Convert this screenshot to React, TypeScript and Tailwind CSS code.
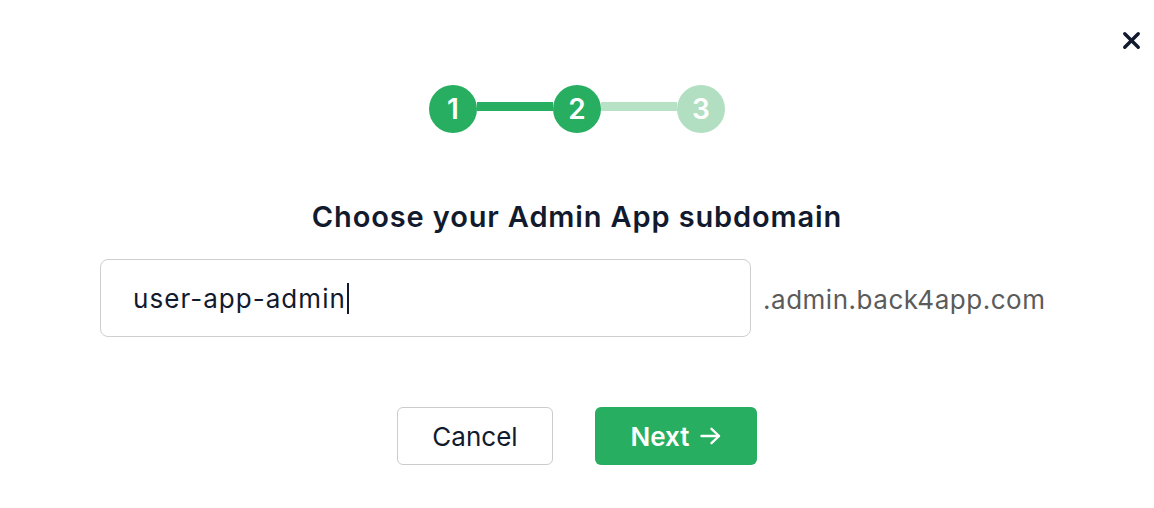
import { X } from "lucide-react";

const steps = [
  { n: 1, done: true },
  { n: 2, done: true },
  { n: 3, done: false },
];

function Stepper() {
  return (
    <div className="flex items-center">
      {steps.map((s, i) => (
        <div key={s.n} className="flex items-center">
          {i > 0 && (
            <div
              className={
                s.done
                  ? "h-[9px] w-[76px] -mt-[6px] bg-[#27ae60]"
                  : "h-[9px] w-[76px] -mt-[6px] bg-[#b7e2c6]"
              }
            />
          )}
          <div
            className={
              s.done
                ? "grid h-12 w-12 place-items-center rounded-full bg-[#27ae60] text-[28px] font-semibold text-white"
                : "grid h-12 w-12 place-items-center rounded-full bg-[#b2dfc1] text-[28px] font-semibold text-white"
            }
          >
            {s.n}
          </div>
        </div>
      ))}
    </div>
  );
}

function Arrow() {
  return (
    <svg width="21" height="18" viewBox="0 0 21 18" fill="none" stroke="currentColor" strokeWidth="2.4" strokeLinecap="round" strokeLinejoin="round">
      <path d="M1.5 9H19" />
      <path d="M11.5 1.8L19 9l-7.5 7.2" />
    </svg>
  );
}

export default function App() {
  return (
    <div className="flex h-[508px] w-full flex-col bg-white font-['Inter',sans-serif] text-[#121a2e]">
      <div className="flex justify-end pt-[27px] pr-[12px]">
        <button aria-label="Close" className="grid h-6 w-6 place-items-center text-[#121a2e]">
          <X size={27} strokeWidth={3} />
        </button>
      </div>

      <div className="mt-[34px] flex justify-center">
        <Stepper />
      </div>

      <h1 className="mt-[67px] text-center text-[29px] leading-[34px] font-semibold tracking-[0.03em]">
        Choose your Admin App subdomain
      </h1>

      <div className="mt-[25px] flex items-center gap-3 pl-[100px]">
        <div className="flex h-[78px] w-[651px] items-center rounded-lg border border-[#cfcfcf] px-8 text-[26px] tracking-[0.04em]">
          <span>user-app-admin</span>
          <span className="ml-[1px] h-[31px] w-[2px] bg-[#121a2e]" />
        </div>
        <span className="mt-[3px] text-[26px] tracking-[0.02em] text-[#5b5b5b]">.admin.back4app.com</span>
      </div>

      <div className="mt-[70px] flex justify-center gap-[42px]">
        <button className="h-[58px] w-[156px] rounded-md border border-[#cccccc] bg-white text-[26px] text-[#121a2e]">
          Cancel
        </button>
        <button className="flex h-[58px] w-[162px] items-center justify-center gap-[11px] rounded-md bg-[#27ae60] text-[26px] font-semibold text-white">
          Next
          <Arrow />
        </button>
      </div>
    </div>
  );
}
